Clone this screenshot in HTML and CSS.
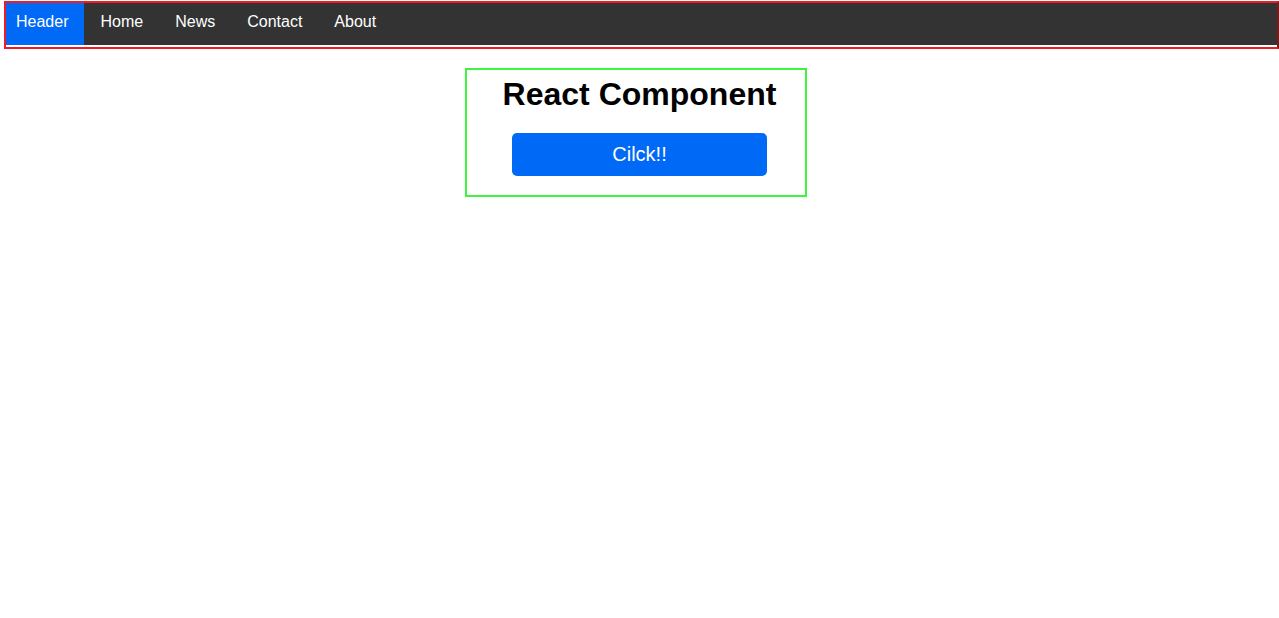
FILE: index.html
```html
<!DOCTYPE html>
<html>
<head>
<meta charset="utf-8">
<link rel="stylesheet" href="styles.css">
</head>
<body>
<div class="header-frame">
  <ul class="nav">
    <li class="nav-item active">Header</li>
    <li class="nav-item">Home</li>
    <li class="nav-item">News</li>
    <li class="nav-item">Contact</li>
    <li class="nav-item">About</li>
  </ul>
</div>
<div class="component">
  <h1 class="title">React Component</h1>
  <button class="btn">Cilck!!</button>
</div>
</body>
</html>
```

FILE: styles.css
```css
html, body {
  margin: 0;
  padding: 0;
  background: #fff;
  font-family: "Liberation Sans", Arial, Helvetica, sans-serif;
}

.header-frame {
  margin: 1px 0 0 4px;
  border: 2px solid #ee1c25;
  border-right-color: #7a1a1a;
  padding-bottom: 2px;
}

.nav {
  list-style: none;
  margin: 0;
  padding: 0;
  display: flex;
  background: #333333;
  height: 42px;
}

.nav-item {
  color: #ffffff;
  font-size: 16px;
  line-height: 38px;
  padding: 0 16px 4px 16px;
}

.nav-item.active {
  background: #0069f6;
  padding-left: 10px;
  padding-right: 16px;
}

.component {
  box-sizing: border-box;
  width: 342px;
  margin: 19px 0 0 calc(50% - 174.5px);
  border: 2px solid #3cf53c;
  padding: 0 0 19px 7px;
  display: flex;
  flex-direction: column;
  align-items: center;
}

.title {
  margin: 4px 0 0 0;
  font-size: 32px;
  font-weight: bold;
  line-height: 40px;
  color: #000;
}

.btn {
  margin-top: 19px;
  width: 255px;
  height: 43px;
  border: none;
  border-radius: 5px;
  background: #0069f6;
  color: #fff;
  font-family: "Liberation Sans", Arial, Helvetica, sans-serif;
  font-size: 20px;
  padding: 0;
}
```
